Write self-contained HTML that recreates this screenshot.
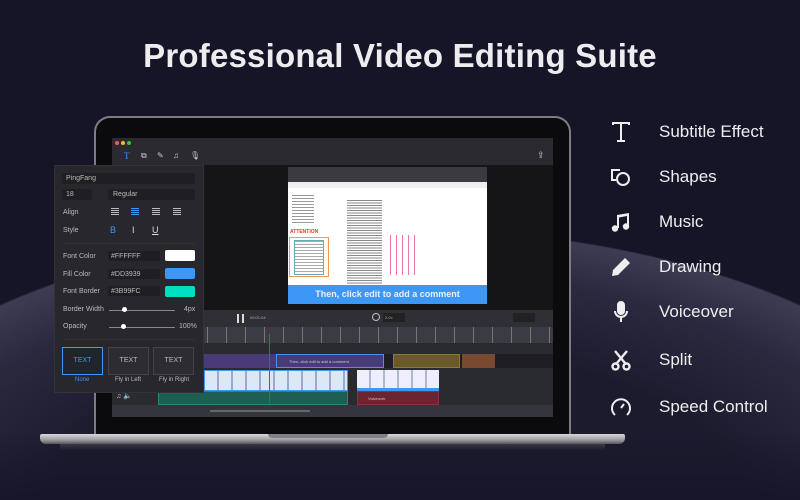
<!DOCTYPE html>
<html><head><meta charset="utf-8"><style>
*{margin:0;padding:0;box-sizing:border-box}
html,body{width:800px;height:500px;overflow:hidden}
body{background:#161528;font-family:"Liberation Sans",sans-serif;position:relative;color:#fff}
#wrap{position:absolute;left:0;top:0;width:800px;height:500px;overflow:hidden;background:radial-gradient(ellipse 600px 300px at 400px 528px,#1c1b2e 0%,#1c1b2e 60%,#2a293f 85%,#3d3c54 99.5%,#161528 100%)}
.abs{position:absolute}
h1{position:absolute;top:37px;width:800px;text-align:center;font-size:33px;font-weight:bold;color:#ededf0;letter-spacing:0.2px}
.feat{position:absolute;left:659px;font-size:17px;color:#eee}
.ico{position:absolute;left:608px;width:26px;height:26px}
.p{font-size:7px;color:#bbb;position:absolute}
.inp{position:absolute;background:#1e1e23;border-radius:2px}
</style></head><body><div id="wrap">
<div class="abs" style="left:0;top:430px;width:800px;height:70px;background:linear-gradient(rgba(23,22,42,0),#17162a)"></div>
<h1>Professional Video Editing Suite</h1>

<div class="abs" style="left:94px;top:116px;width:477px;height:322px;border-radius:16px 16px 0 0;background:#0b0b0e;border:2px solid #7c7c84;border-bottom:none"></div>
<div class="abs" style="left:40px;top:434px;width:585px;height:10px;border-radius:2px 2px 6px 6px;background:linear-gradient(#d8d8dc,#9a9aa0 60%,#55555b)"></div>
<div class="abs" style="left:268px;top:434px;width:120px;height:4px;border-radius:0 0 4px 4px;background:#808088"></div>
<div class="abs" style="left:60px;top:444px;width:545px;height:6px;background:linear-gradient(#3a3a44,rgba(0,0,0,0))"></div>

<div class="abs" style="left:112px;top:138px;width:441px;height:279px;background:#151518"></div>
<div class="abs" style="left:112px;top:138px;width:441px;height:27px;background:#2a2a30"></div>
<div class="abs" style="left:115px;top:141px;width:4px;height:4px;border-radius:50%;background:#f25a52"></div>
<div class="abs" style="left:121px;top:141px;width:4px;height:4px;border-radius:50%;background:#f5b92e"></div>
<div class="abs" style="left:127px;top:141px;width:4px;height:4px;border-radius:50%;background:#35c545"></div>
<div class="abs" style="left:124px;top:151px;font-size:9px;color:#3d97f5;font-family:'Liberation Serif',serif">T</div>
<div class="abs" style="left:141px;top:151px;font-size:8px;color:#ccc">⧉</div>
<div class="abs" style="left:157px;top:151px;font-size:8px;color:#ccc">✎</div>
<div class="abs" style="left:173px;top:151px;font-size:8px;color:#ccc">♫</div>
<div class="abs" style="left:190px;top:151px;font-size:8px;color:#ccc">🎙</div>
<div class="abs" style="left:537px;top:150px;font-size:9px;color:#ccc">⇪</div>

<div class="abs" style="left:288px;top:167px;width:199px;height:118px;background:#fff"></div>
<div class="abs" style="left:288px;top:167px;width:199px;height:15px;background:#3a3a40"></div>
<div class="abs" style="left:288px;top:182px;width:199px;height:6px;background:#eee"></div>
<div class="abs" style="left:292px;top:195px;width:22px;height:30px;background:repeating-linear-gradient(#999 0 1px,#fff 1px 3px)"></div>
<div class="abs" style="left:290px;top:229px;font-size:5px;color:#e33;font-weight:bold">ATTENTION</div>
<div class="abs" style="left:289px;top:237px;width:40px;height:40px;border:1px solid #f39a4a"></div>
<div class="abs" style="left:294px;top:240px;width:30px;height:35px;background:repeating-linear-gradient(#aaa 0 1px,#fff 1px 3px);border:1px solid #6ab"></div>
<div class="abs" style="left:347px;top:200px;width:35px;height:85px;background:repeating-linear-gradient(#888 0 1px,#fff 1px 2.5px)"></div>
<div class="abs" style="left:390px;top:235px;width:30px;height:40px;background:repeating-linear-gradient(90deg,#e7a 0 1px,#fff 1px 6px)"></div>
<div class="abs" style="left:288px;top:285px;width:199px;height:19px;background:#3d97f5;font-size:9px;font-weight:bold;color:#eef;text-align:center;line-height:19px">Then, click edit to add a comment</div>

<div class="abs" style="left:112px;top:310px;width:441px;height:17px;background:#2f2f36"></div>
<div class="abs" style="left:237px;top:314px;width:7px;height:9px;border-left:2px solid #ddd;border-right:2px solid #ddd"></div>
<div class="abs" style="left:250px;top:315px;font-size:4px;color:#aaa">00:01:04</div>
<div class="abs" style="left:372px;top:313px;width:8px;height:8px;border:1px solid #bbb;border-radius:50%"></div>
<div class="abs" style="left:383px;top:313px;width:22px;height:9px;background:#222;font-size:4px;color:#aaa;padding:2px">2.0×</div>
<div class="abs" style="left:513px;top:313px;width:22px;height:9px;background:#222"></div>
<div class="abs" style="left:112px;top:327px;width:441px;height:16px;background:#3b3b44;background-image:repeating-linear-gradient(90deg,#777 0 1px,rgba(0,0,0,0) 1px 19px)"></div>
<div class="abs" style="left:112px;top:343px;width:441px;height:74px;background:#2a2a31"></div>
<div class="abs" style="left:112px;top:354px;width:441px;height:14px;background:#1e1e24"></div>
<div class="abs" style="left:204px;top:354px;width:72px;height:14px;background:#4a3a78"></div>
<div class="abs" style="left:276px;top:354px;width:108px;height:14px;background:#4a3a78;border:1px solid #3d97f5;font-size:4px;color:#ccc;padding:4px 12px">Then, click edit to add a comment</div>
<div class="abs" style="left:393px;top:354px;width:67px;height:14px;background:#6a5a2a;border:1px solid #8a7a3a"></div>
<div class="abs" style="left:462px;top:354px;width:33px;height:14px;background:#7a4a30"></div>
<div class="abs" style="left:204px;top:370px;width:144px;height:21px;background:repeating-linear-gradient(90deg,#dde8f5 0 12px,#9ac 12px 14px);border:1px solid #3d97f5"></div>
<div class="abs" style="left:357px;top:370px;width:82px;height:21px;background:repeating-linear-gradient(90deg,#eef 0 12px,#abc 12px 14px);border-bottom:3px solid #3d97f5"></div>
<div class="abs" style="left:158px;top:391px;width:190px;height:14px;background:#1d5f52;border:1px solid #2a8a70"></div>
<div class="abs" style="left:357px;top:391px;width:82px;height:14px;background:#6a2530;border:1px solid #8a3040;font-size:4px;color:#ccc;padding:4px 10px">Voiceover</div>
<div class="abs" style="left:269px;top:334px;width:1px;height:71px;background:#c03050"></div>
<div class="abs" style="left:112px;top:405px;width:441px;height:12px;background:#35353d"></div>
<div class="abs" style="left:210px;top:410px;width:100px;height:2px;background:#666"></div>
<div class="abs" style="left:116px;top:392px;font-size:7px;color:#ccc">♫ 🔈</div>

<div class="abs" style="left:54px;top:165px;width:150px;height:228px;background:#27272d;border:1px solid #333"></div>
<div class="inp" style="left:62px;top:173px;width:133px;height:11px"></div>
<div class="p" style="left:66px;top:175px">PingFang</div>
<div class="inp" style="left:62px;top:189px;width:30px;height:11px"></div>
<div class="p" style="left:66px;top:191px">18</div>
<div class="inp" style="left:108px;top:189px;width:87px;height:11px"></div>
<div class="p" style="left:113px;top:191px">Regular</div>
<div class="p" style="left:63px;top:209px">Align</div>
<div class="abs" style="left:111px;top:208px;width:8px;height:7px;background:repeating-linear-gradient(#bbb 0 1px,rgba(0,0,0,0) 1px 2px)"></div>
<div class="abs" style="left:131px;top:208px;width:8px;height:7px;background:repeating-linear-gradient(#3d97f5 0 1px,rgba(0,0,0,0) 1px 2px)"></div>
<div class="abs" style="left:152px;top:208px;width:8px;height:7px;background:repeating-linear-gradient(#bbb 0 1px,rgba(0,0,0,0) 1px 2px)"></div>
<div class="abs" style="left:173px;top:208px;width:8px;height:7px;background:repeating-linear-gradient(#bbb 0 1px,rgba(0,0,0,0) 1px 2px)"></div>
<div class="p" style="left:63px;top:227px">Style</div>
<div class="abs" style="left:110px;top:225px;font-size:9px;color:#3d97f5">B</div>
<div class="abs" style="left:132px;top:225px;font-size:9px;color:#ddd">I</div>
<div class="abs" style="left:152px;top:225px;font-size:9px;color:#ddd;text-decoration:underline">U</div>
<div class="abs" style="left:63px;top:243px;width:132px;height:1px;background:#333"></div>
<div class="p" style="left:63px;top:253px">Font Color</div>
<div class="inp" style="left:108px;top:251px;width:52px;height:10px"></div><div class="p" style="left:111px;top:253px">#FFFFFF</div>
<div class="abs" style="left:165px;top:250px;width:30px;height:11px;background:#fff;border-radius:2px"></div>
<div class="p" style="left:63px;top:271px">Fill Color</div>
<div class="inp" style="left:108px;top:269px;width:52px;height:10px"></div><div class="p" style="left:111px;top:271px">#DD3939</div>
<div class="abs" style="left:165px;top:268px;width:30px;height:11px;background:#3d97f5;border-radius:2px"></div>
<div class="p" style="left:63px;top:288px">Font Border</div>
<div class="inp" style="left:108px;top:286px;width:52px;height:10px"></div><div class="p" style="left:111px;top:288px">#3B99FC</div>
<div class="abs" style="left:165px;top:286px;width:30px;height:11px;background:#00e0c0;border-radius:2px"></div>
<div class="p" style="left:63px;top:306px">Border Width</div>
<div class="abs" style="left:109px;top:310px;width:66px;height:1px;background:#888"></div>
<div class="abs" style="left:122px;top:307px;width:5px;height:5px;border-radius:50%;background:#fff"></div>
<div class="p" style="left:184px;top:306px">4px</div>
<div class="p" style="left:63px;top:323px">Opacity</div>
<div class="abs" style="left:109px;top:327px;width:66px;height:1px;background:#888"></div>
<div class="abs" style="left:121px;top:324px;width:5px;height:5px;border-radius:50%;background:#fff"></div>
<div class="p" style="left:179px;top:323px">100%</div>
<div class="abs" style="left:63px;top:339px;width:132px;height:1px;background:#333"></div>
<div class="abs" style="left:62px;top:347px;width:41px;height:28px;border:1px solid #3d97f5;background:#22242c;font-size:7px;color:#3d97f5;text-align:center;line-height:26px">TEXT</div>
<div class="abs" style="left:108px;top:347px;width:41px;height:28px;border:1px solid #444;background:#2c2c32;font-size:7px;color:#bbb;text-align:center;line-height:26px">TEXT</div>
<div class="abs" style="left:153px;top:347px;width:41px;height:28px;border:1px solid #444;background:#2c2c32;font-size:7px;color:#bbb;text-align:center;line-height:26px">TEXT</div>
<div class="p" style="left:75px;top:377px;color:#3d97f5;font-size:6px">None</div>
<div class="p" style="left:115px;top:377px;font-size:6px">Fly in Left</div>
<div class="p" style="left:159px;top:377px;font-size:6px">Fly in Right</div>

<svg class="ico" style="top:119px" viewBox="0 0 26 26" fill="none" stroke="#eee" stroke-width="2"><path d="M5 6V4h16v2M13 4v18M9 22h8"/></svg>
<svg class="ico" style="top:164px" viewBox="0 0 26 26" fill="none" stroke="#eee" stroke-width="2"><path d="M12 6H4v10h4"/><circle cx="15" cy="15" r="6"/></svg>
<svg class="ico" style="top:209px" viewBox="0 0 26 26" fill="#eee"><path d="M9 6l12-2v13h-2V7l-8 1.5V19h-2z"/><circle cx="7" cy="19.5" r="3.2"/><circle cx="18" cy="17.5" r="3.2"/></svg>
<svg class="ico" style="top:254px" viewBox="0 0 26 26" fill="#eee"><path d="M17 4l5 5-12 12-6 1 1-6z"/></svg>
<svg class="ico" style="top:299px" viewBox="0 0 26 26" fill="none" stroke="#eee" stroke-width="2"><rect x="10" y="3" width="6" height="12" rx="3" fill="#eee"/><path d="M7 12a6 6 0 0012 0M13 18v5"/></svg>
<svg class="ico" style="top:347px" viewBox="0 0 26 26" fill="none" stroke="#eee" stroke-width="2.4"><path d="M7 4l10 12M19 4L9 16"/><circle cx="7.5" cy="19.5" r="3"/><circle cx="18.5" cy="19.5" r="3"/></svg>
<svg class="ico" style="top:394px" viewBox="0 0 26 26" fill="none" stroke="#eee" stroke-width="2"><path d="M7 21a9 9 0 1112 0"/><path d="M13 14l3-4"/></svg>
<div class="feat" style="top:122px">Subtitle Effect</div>
<div class="feat" style="top:167px">Shapes</div>
<div class="feat" style="top:212px">Music</div>
<div class="feat" style="top:257px">Drawing</div>
<div class="feat" style="top:302px">Voiceover</div>
<div class="feat" style="top:350px">Split</div>
<div class="feat" style="top:397px">Speed Control</div>
</div></body></html>
